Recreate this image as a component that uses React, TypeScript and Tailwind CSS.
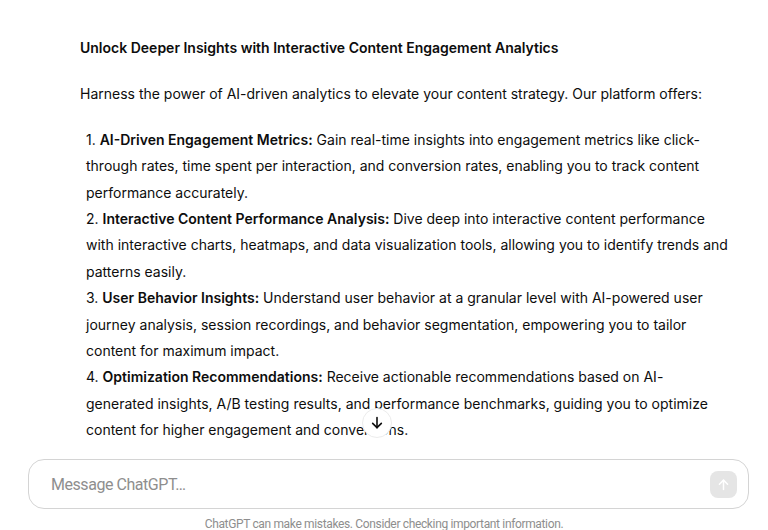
import React from "react";

const items = [
  {
    n: "1.",
    b: "AI-Driven Engagement Metrics:",
    t: " Gain real-time insights into engagement metrics like click-through rates, time spent per interaction, and conversion rates, enabling you to track content performance accurately.",
  },
  {
    n: "2.",
    b: "Interactive Content Performance Analysis:",
    t: " Dive deep into interactive content performance with interactive charts, heatmaps, and data visualization tools, allowing you to identify trends and patterns easily.",
  },
  {
    n: "3.",
    b: "User Behavior Insights:",
    t: " Understand user behavior at a granular level with AI-powered user journey analysis, session recordings, and behavior segmentation, empowering you to tailor content for maximum impact.",
  },
  {
    n: "4.",
    b: "Optimization Recommendations:",
    t: " Receive actionable recommendations based on AI-generated insights, A/B testing results, and performance benchmarks, guiding you to optimize content for higher engagement and conversions.",
  },
];

export default function App() {
  return (
    <div className="relative flex h-[530px] w-[768px] flex-col overflow-hidden bg-white text-[#0d0d0d]" style={{ fontFamily: "Inter, 'Noto Sans', sans-serif" }}>
      <div className="h-[459px] shrink-0 overflow-hidden pl-[80px] pr-[39px] pt-[35px] text-[14px] leading-[26.4px]">
        <h3 className="font-semibold">Unlock Deeper Insights with Interactive Content Engagement Analytics</h3>
        <p className="mt-[20px]">Harness the power of AI-driven analytics to elevate your content strategy. Our platform offers:</p>
        <div className="mt-[19px] pl-[6px]">
          {items.map((it) => (
            <p key={it.n}>
              {it.n} <span className="font-semibold">{it.b}</span>
              {it.t}
            </p>
          ))}
        </div>
      </div>

      <button className="absolute left-[362px] top-[408px] flex h-[30px] w-[30px] items-center justify-center rounded-full border border-[#ececec] bg-white">
        <svg width="16" height="16" viewBox="0 0 24 24" fill="none" stroke="#0d0d0d" strokeWidth="2.4" strokeLinecap="round" strokeLinejoin="round">
          <path d="M12 4v15" />
          <path d="M5.5 12.5 12 19l6.5-6.5" />
        </svg>
      </button>

      <div className="shrink-0 px-[28px]">
        <div className="flex h-[50px] w-[721px] items-center justify-between rounded-[16px] border border-[#d4d4d4] pl-[22px] pr-[11px]">
          <span className="pt-[2px] text-[16px] tracking-[-0.45px] text-[#8e8e8e]" style={{ fontFamily: "Roboto, 'Noto Sans', sans-serif" }}>Message ChatGPT…</span>
          <div className="flex h-[27px] w-[27px] items-center justify-center rounded-[8px] bg-[#e5e5e5]">
            <svg width="15" height="15" viewBox="0 0 24 24" fill="none" stroke="#ffffff" strokeWidth="2.4" strokeLinecap="round" strokeLinejoin="round">
              <path d="M12 20V5" />
              <path d="M5.5 11.5 12 5l6.5 6.5" />
            </svg>
          </div>
        </div>
      </div>
      <div className="mt-[7px] shrink-0 text-center text-[12px] leading-[16px] tracking-[-0.35px] text-[#8e8e8e]" style={{ fontFamily: "Roboto, 'Noto Sans', sans-serif" }}>
        ChatGPT can make mistakes. Consider checking important information.
      </div>
    </div>
  );
}
